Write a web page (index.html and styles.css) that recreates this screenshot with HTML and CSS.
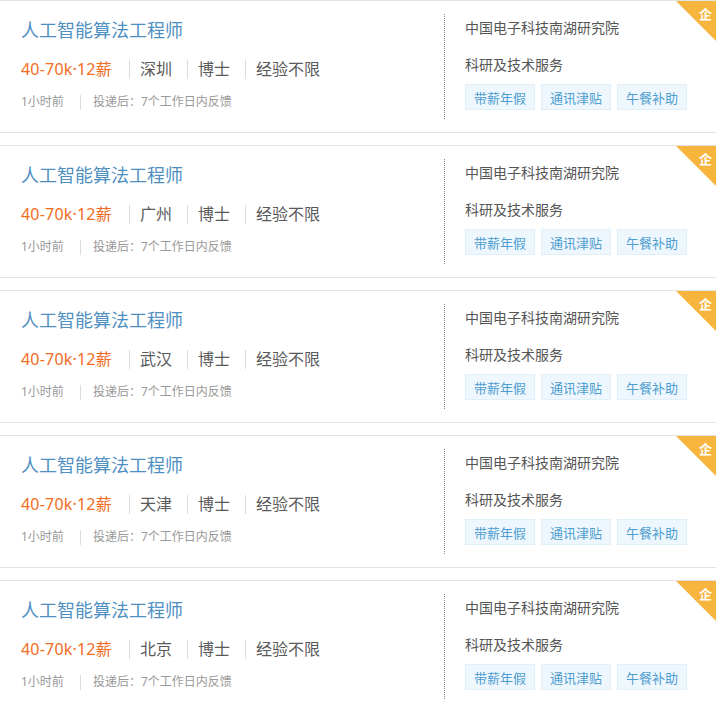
FILE: index.html
```html
<!DOCTYPE html>
<html lang="zh">
<head>
<meta charset="utf-8">
<title>职位列表</title>
<link rel="stylesheet" href="styles.css">
</head>
<body>
<div class="list">
  <div class="card">
    <div class="main">
      <div class="title">人工智能算法工程师</div>
      <div class="info"><span class="salary">40-70k·12薪</span><span class="item">深圳</span><span class="item">博士</span><span class="item">经验不限</span></div>
      <div class="meta"><span class="time">1小时前</span><span class="fb">投递后：7个工作日内反馈</span></div>
    </div>
    <div class="side">
      <div class="company">中国电子科技南湖研究院</div>
      <div class="industry">科研及技术服务</div>
      <div class="tags"><span class="tag">带薪年假</span><span class="tag">通讯津贴</span><span class="tag">午餐补助</span></div>
    </div>
    <div class="badge"><span>企</span></div>
  </div>
  <div class="card">
    <div class="main">
      <div class="title">人工智能算法工程师</div>
      <div class="info"><span class="salary">40-70k·12薪</span><span class="item">广州</span><span class="item">博士</span><span class="item">经验不限</span></div>
      <div class="meta"><span class="time">1小时前</span><span class="fb">投递后：7个工作日内反馈</span></div>
    </div>
    <div class="side">
      <div class="company">中国电子科技南湖研究院</div>
      <div class="industry">科研及技术服务</div>
      <div class="tags"><span class="tag">带薪年假</span><span class="tag">通讯津贴</span><span class="tag">午餐补助</span></div>
    </div>
    <div class="badge"><span>企</span></div>
  </div>
  <div class="card">
    <div class="main">
      <div class="title">人工智能算法工程师</div>
      <div class="info"><span class="salary">40-70k·12薪</span><span class="item">武汉</span><span class="item">博士</span><span class="item">经验不限</span></div>
      <div class="meta"><span class="time">1小时前</span><span class="fb">投递后：7个工作日内反馈</span></div>
    </div>
    <div class="side">
      <div class="company">中国电子科技南湖研究院</div>
      <div class="industry">科研及技术服务</div>
      <div class="tags"><span class="tag">带薪年假</span><span class="tag">通讯津贴</span><span class="tag">午餐补助</span></div>
    </div>
    <div class="badge"><span>企</span></div>
  </div>
  <div class="card">
    <div class="main">
      <div class="title">人工智能算法工程师</div>
      <div class="info"><span class="salary">40-70k·12薪</span><span class="item">天津</span><span class="item">博士</span><span class="item">经验不限</span></div>
      <div class="meta"><span class="time">1小时前</span><span class="fb">投递后：7个工作日内反馈</span></div>
    </div>
    <div class="side">
      <div class="company">中国电子科技南湖研究院</div>
      <div class="industry">科研及技术服务</div>
      <div class="tags"><span class="tag">带薪年假</span><span class="tag">通讯津贴</span><span class="tag">午餐补助</span></div>
    </div>
    <div class="badge"><span>企</span></div>
  </div>
  <div class="card">
    <div class="main">
      <div class="title">人工智能算法工程师</div>
      <div class="info"><span class="salary">40-70k·12薪</span><span class="item">北京</span><span class="item">博士</span><span class="item">经验不限</span></div>
      <div class="meta"><span class="time">1小时前</span><span class="fb">投递后：7个工作日内反馈</span></div>
    </div>
    <div class="side">
      <div class="company">中国电子科技南湖研究院</div>
      <div class="industry">科研及技术服务</div>
      <div class="tags"><span class="tag">带薪年假</span><span class="tag">通讯津贴</span><span class="tag">午餐补助</span></div>
    </div>
    <div class="badge"><span>企</span></div>
  </div>
</div>
</body>
</html>
```
FILE: styles.css
```css
html, body {
  margin: 0;
  padding: 0;
  background: #fff;
}
body {
  font-family: "Noto Sans", "Noto Sans CJK SC", sans-serif;
  color: #555;
}
.list {
  display: flex;
  flex-direction: column;
  gap: 12px;
}
.card {
  position: relative;
  display: flex;
  height: 131px;
  border-top: 1px solid #e3e3e3;
  border-bottom: 1px solid #e3e3e3;
  background: #fff;
  overflow: hidden;
}
.main {
  flex: 1;
  padding: 17px 0 0 21px;
}
.title {
  font-size: 18px;
  line-height: 24px;
  color: #4f90c2;
}
.info {
  display: flex;
  align-items: center;
  margin-top: 15px;
  font-size: 16px;
  line-height: 24px;
  color: #5a5a5a;
}
.salary {
  color: #f26c22;
  margin-right: 17px;
  letter-spacing: 0.2px;
}
.item {
  display: inline-flex;
  align-items: center;
  height: 19px;
  border-left: 1px solid #dcdcdc;
  padding-left: 10px;
  margin-right: 15px;
}
.meta {
  display: flex;
  align-items: center;
  margin-top: 12px;
  font-size: 12px;
  line-height: 18px;
  color: #999;
}
.time {
  margin-right: 16px;
}
.fb {
  display: inline-flex;
  align-items: center;
  height: 15px;
  border-left: 1px solid #dcdcdc;
  padding-left: 12px;
}
.side {
  width: 251px;
  margin: 13px 0;
  border-left: 1px dotted #8a8a8a;
  padding: 4px 0 0 20px;
}
.company {
  font-size: 14px;
  line-height: 20px;
  color: #555;
}
.industry {
  font-size: 14px;
  line-height: 20px;
  margin-top: 17px;
  color: #555;
}
.tags {
  display: flex;
  gap: 6px;
  margin-top: 9px;
}
.tag {
  box-sizing: border-box;
  width: 70px;
  height: 26px;
  display: flex;
  align-items: center;
  justify-content: center;
  font-size: 13px;
  color: #4d9dcf;
  background: #eef7fd;
  border: 1px solid #e1eff9;
}
.badge {
  position: absolute;
  top: 0;
  right: 0;
  width: 40px;
  height: 40px;
  background: #f7b53d;
  clip-path: polygon(0 0, 100% 0, 100% 100%);
}
.badge span {
  position: absolute;
  top: 5px;
  right: 4px;
  font-size: 13px;
  line-height: 16px;
  font-weight: bold;
  color: #fff;
}
```
